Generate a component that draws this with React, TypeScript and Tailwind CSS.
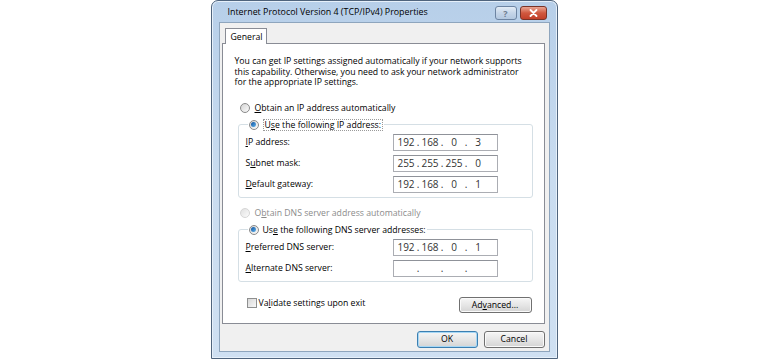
import type { ReactNode } from 'react';

function Radio({ checked = false, disabled = false }: { checked?: boolean; disabled?: boolean }) {
  return (
    <span
      className={`relative inline-flex h-[10px] w-[10px] shrink-0 items-center justify-center rounded-full border bg-gradient-to-br from-[#d4d4d4] to-[#fbfbfb] ${
        disabled ? 'border-[#c4c4c4] opacity-70' : 'border-[#8a8a8a]'
      }`}
    >
      {checked && (
        <span className="h-[5px] w-[5px] rounded-full bg-gradient-to-br from-[#0b4f9c] to-[#5fb4ee]" />
      )}
    </span>
  );
}

function IpBox({ octets }: { octets: string[] }) {
  return (
    <div className="flex h-[17px] w-[105px] items-center border border-[#abadb3] border-t-[#8f9299] bg-white pl-[2px] text-[10px] text-[#333]">
      {octets.map((o, i) => (
        <div key={i} className="flex items-center">
          <span className="w-[21px] text-center">{o}</span>
          {i < 3 && <span className="w-[3px] text-center">.</span>}
        </div>
      ))}
    </div>
  );
}

function Row({ label, octets }: { label: ReactNode; octets: string[] }) {
  return (
    <div className="flex items-center">
      <span className="w-[147px]">{label}</span>
      <IpBox octets={octets} />
    </div>
  );
}

function Button({ children, primary = false, className = '' }: { children: ReactNode; primary?: boolean; className?: string }) {
  return (
    <div
      className={`flex items-center justify-center rounded-[3px] border bg-gradient-to-b from-[#f6f6f6] via-[#e6e6e6] to-[#d4d4d4] ${
        primary ? 'border-[#3c7fb1] shadow-[inset_0_0_0_1px_#a6d7f5]' : 'border-[#707070] shadow-[inset_0_0_0_1px_#fafafa]'
      } ${className}`}
    >
      {children}
    </div>
  );
}

export default function App() {
  return (
    <div className="flex h-[359px] w-full justify-center bg-white font-['Open_Sans','Noto_Sans',sans-serif] text-[8.7px] leading-[12px] text-black">
      <div className="flex h-[359px] w-[347px] flex-col rounded-t-[7px] border border-[#4f647d] bg-gradient-to-b from-[#b7cfe9] via-[#c9dcf0] to-[#cfe0f2] px-[7px] pb-[6px] shadow-[inset_0_0_0_1px_#e6f0fa]">
        {/* title bar */}
        <div className="flex h-[21px] shrink-0 items-center justify-between pl-[9px] pr-[3px]">
          <span className="text-[8.9px]">Internet Protocol Version 4 (TCP/IPv4) Properties</span>
          <div className="flex items-start gap-[3px] self-start pt-[5px]">
            <div className="flex h-[14px] w-[22px] items-center justify-center rounded-[3px] border border-[#6d84a2] bg-gradient-to-b from-[#e3ecf6] via-[#c5d5e8] to-[#b3c8e0] text-[9px] font-bold leading-none text-[#6e7d90]">
              ?
            </div>
            <div className="flex h-[14px] w-[27px] items-center justify-center rounded-[3px] border border-[#7a3327] bg-gradient-to-b from-[#e9a593] via-[#d0583f] to-[#c2402a]">
              <svg width="9" height="8" viewBox="0 0 9 8">
                <path d="M1.5 1 L7.5 7 M7.5 1 L1.5 7" stroke="#fff" strokeWidth="1.8" strokeLinecap="round" />
              </svg>
            </div>
          </div>
        </div>

        {/* client area */}
        <div className="flex flex-1 flex-col border border-[#8ea5bd] bg-[#f0f0f0] pl-[2px] pr-[4px] pt-[5px]">
          {/* tab strip */}
          <div className="relative z-10 -mb-px ml-[3px] flex h-[16px] w-[42px] items-center border border-b-0 border-[#898c95] bg-white pl-[5px]">
            General
          </div>

          {/* tab panel */}
          <div className="flex flex-col border border-[#898c95] bg-white pb-[10px] pt-[12px]">
            <p className="pl-[12px] leading-[10.5px]">
              You can get IP settings assigned automatically if your network supports
              <br />
              this capability. Otherwise, you need to ask your network administrator
              <br />
              for the appropriate IP settings.
            </p>

            <div className="ml-[17px] mt-[14px] flex h-[12px] items-center gap-[5px]">
              <Radio />
              <span>
                <u>O</u>btain an IP address automatically
              </span>
            </div>

            <fieldset className="ml-[15px] mr-[11px] mt-[5px] rounded-[3px] border border-[#d5dfe5] pb-[4px] pl-[7px]">
              <legend className="ml-[2px] flex h-[12px] items-center gap-[4px] px-[1px]">
                <Radio checked />
                <span className="border border-dotted border-[#9a9a9a] px-px leading-[10px]">
                  U<u>s</u>e the following IP address:
                </span>
              </legend>
              <div className="mt-[3px] flex flex-col gap-[4px]">
                <Row label={<><u>I</u>P address:</>} octets={['192', '168', '0', '3']} />
                <Row label={<>S<u>u</u>bnet mask:</>} octets={['255', '255', '255', '0']} />
                <Row label={<><u>D</u>efault gateway:</>} octets={['192', '168', '0', '1']} />
              </div>
            </fieldset>

            <div className="ml-[17px] mt-[9px] flex h-[12px] items-center gap-[5px] text-[#8b8b8b]">
              <Radio disabled />
              <span>
                O<u>b</u>tain DNS server address automatically
              </span>
            </div>

            <fieldset className="ml-[15px] mr-[11px] mt-[5px] rounded-[3px] border border-[#d5dfe5] pb-[4px] pl-[7px]">
              <legend className="ml-[2px] flex h-[12px] items-center gap-[4px] px-[1px]">
                <Radio checked />
                <span>
                  Us<u>e</u> the following DNS server addresses:
                </span>
              </legend>
              <div className="mt-[3px] flex flex-col gap-[4px]">
                <Row label={<><u>P</u>referred DNS server:</>} octets={['192', '168', '0', '1']} />
                <Row label={<><u>A</u>lternate DNS server:</>} octets={['', '', '', '']} />
              </div>
            </fieldset>

            <div className="ml-[24px] mr-[12px] mt-[15px] flex items-start justify-between">
              <div className="mt-[1px] flex h-[10px] items-center gap-[2px]">
                <span className="h-[10px] w-[10px] border border-[#8e8f8f] bg-gradient-to-br from-[#d8d8d8] to-[#f8f8f8]" />
                <span>
                  Va<u>l</u>idate settings upon exit
                </span>
              </div>
              <Button className="h-[16px] w-[73px]">
                Ad<u>v</u>anced...
              </Button>
            </div>
          </div>

          {/* dialog buttons */}
          <div className="mt-[7px] flex justify-end gap-[6px]">
            <Button primary className="h-[17px] w-[61px]">
              OK
            </Button>
            <Button className="h-[17px] w-[61px]">Cancel</Button>
          </div>
        </div>
      </div>
    </div>
  );
}
